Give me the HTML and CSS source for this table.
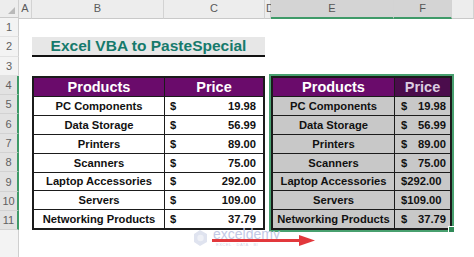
FILE: index.html
```html
<!DOCTYPE html>
<html>
<head>
<meta charset="utf-8">
<link rel="stylesheet" href="styles.css">
</head>
<body>
<div class="sheet">
  <div class="corner"><span class="tri"></span></div>
  <div class="colheads">
    <div class="ch">A</div>
    <div class="ch">B</div>
    <div class="ch">C</div>
    <div class="ch ch-d">D</div>
    <div class="ch sel">E</div>
    <div class="ch sel">F</div>
    <div class="ch"></div>
  </div>
  <div class="rowheads">
    <div class="rh">1</div>
    <div class="rh">2</div>
    <div class="rh">3</div>
    <div class="rh sel">4</div>
    <div class="rh sel">5</div>
    <div class="rh sel">6</div>
    <div class="rh sel">7</div>
    <div class="rh sel">8</div>
    <div class="rh sel">9</div>
    <div class="rh sel">10</div>
    <div class="rh sel">11</div>
    <div class="rh filler"></div>
  </div>
  <div class="body">
    <div class="title">Excel VBA to PasteSpecial</div>

    <div class="tbl tbl-left">
      <div class="th">Products</div><div class="th">Price</div>
      <div class="td">PC Components</div><div class="td num"><span>$</span><span>19.98</span></div>
      <div class="td">Data Storage</div><div class="td num"><span>$</span><span>56.99</span></div>
      <div class="td">Printers</div><div class="td num"><span>$</span><span>89.00</span></div>
      <div class="td">Scanners</div><div class="td num"><span>$</span><span>75.00</span></div>
      <div class="td">Laptop Accessories</div><div class="td num"><span>$</span><span>292.00</span></div>
      <div class="td">Servers</div><div class="td num"><span>$</span><span>109.00</span></div>
      <div class="td">Networking Products</div><div class="td num"><span>$</span><span>37.79</span></div>
    </div>

    <div class="tbl tbl-right">
      <div class="th">Products</div><div class="th th-dim">Price</div>
      <div class="td">PC Components</div><div class="td num"><span>$</span><span>19.98</span></div>
      <div class="td">Data Storage</div><div class="td num"><span>$</span><span>56.99</span></div>
      <div class="td">Printers</div><div class="td num"><span>$</span><span>89.00</span></div>
      <div class="td">Scanners</div><div class="td num"><span>$</span><span>75.00</span></div>
      <div class="td">Laptop Accessories</div><div class="td num"><span>$292.00</span></div>
      <div class="td">Servers</div><div class="td num"><span>$109.00</span></div>
      <div class="td">Networking Products</div><div class="td num"><span>$</span><span>37.79</span></div>
      <span class="handle"></span>
    </div>
  </div>

  <svg class="annot" width="130" height="26" viewBox="0 0 130 26">
    <path d="M4 8 L10 4 L17 8 L17 16 L10 20 L4 16 Z" fill="#dfe3ef"/>
    <circle cx="10.5" cy="12" r="3.2" fill="#eef0f6"/>
    <text x="23" y="13" class="wm">exceldemy</text>
    <text x="26" y="20" class="wm-small">EXCEL · DATA · BI</text>
    <line x1="22" y1="14.5" x2="112" y2="14.5" stroke="#e2383c" stroke-width="3"/>
    <polygon points="109,9 125,14.5 109,20" fill="#e2383c"/>
  </svg>
</div>
</body>
</html>
```

FILE: styles.css
```css
html, body {
  margin: 0;
  padding: 0;
  background: #ffffff;
}

body {
  font-family: "Liberation Sans", Arial, sans-serif;
}

.sheet {
  position: relative;
  width: 474px;
  height: 257px;
  display: grid;
  grid-template-columns: 19px 1fr;
  grid-template-rows: 18px 1fr;
  overflow: hidden;
}

.corner {
  background: #ededed;
  border-right: 1px solid #cfcfcf;
  border-bottom: 1px solid #c9c9c9;
  box-sizing: border-box;
  display: flex;
  justify-content: flex-end;
  align-items: flex-end;
  padding: 0 3px 3px 0;
}

.tri {
  width: 0;
  height: 0;
  border-left: 7px solid transparent;
  border-bottom: 7px solid #b9b9b9;
}

.colheads {
  display: grid;
  grid-template-columns: 13px 132px 101px 6px 123px 58px 1fr;
  background: #ededed;
}

.ch {
  box-sizing: border-box;
  border-right: 1px solid #d3d3d3;
  border-bottom: 1px solid #c9c9c9;
  font-size: 11px;
  line-height: 17px;
  color: #5a5a5a;
  text-align: center;
  white-space: nowrap;
}

.ch-d {
  text-align: left;
  overflow: visible;
  padding-left: 1px;
}

.ch.sel {
  background: #d4d4d4;
  border-bottom: 2px solid #3f9a68;
  color: #555555;
}

.rowheads {
  display: grid;
  grid-template-rows: repeat(11, 19.3px) 1fr;
  background: #f3f3f3;
}

.rh {
  box-sizing: border-box;
  border-right: 1px solid #cfcfcf;
  border-bottom: 1px solid #e2e2e2;
  font-size: 11px;
  color: #606060;
  display: flex;
  align-items: center;
  justify-content: center;
}

.rh.sel {
  background: #e2e2e2;
  border-right: 2px solid #3f9a68;
  border-bottom-color: #d2d2d2;
}

.rh.filler {
  border-bottom: none;
}

.body {
  display: grid;
  grid-template-columns: 13px 132px 101px 6px 123px 58px 1fr;
  grid-template-rows: repeat(11, 19.3px) 1fr;
}

.title {
  grid-column: 2 / 4;
  grid-row: 2;
  background: #e7e7e7;
  border-bottom: 2px solid #111111;
  color: #167a6c;
  font-weight: bold;
  font-size: 15.5px;
  display: flex;
  align-items: center;
  justify-content: center;
  padding-top: 1px;
}

.tbl {
  grid-row: 4 / 12;
  display: grid;
  grid-template-rows: repeat(8, 1fr);
  gap: 1px;
  background: #1b1b1b;
  border: 2px solid #1b1b1b;
}

.tbl-left {
  grid-column: 2 / 4;
  grid-template-columns: 130px 1fr;
}

.tbl-right {
  grid-column: 5 / 7;
  grid-template-columns: 121px 1fr;
  position: relative;
  outline: 2px solid #48a06f;
}

.th {
  background: #6a0b6b;
  color: #ffffff;
  font-weight: bold;
  font-size: 14.5px;
  display: flex;
  align-items: center;
  justify-content: center;
}

.th-dim {
  background: #4b0c4c;
  color: #dccde0;
}

.td {
  background: #ffffff;
  color: #111111;
  font-weight: bold;
  font-size: 11.2px;
  display: flex;
  align-items: center;
  justify-content: center;
  white-space: nowrap;
}

.tbl-right .td {
  background: #c8c8c8;
}

.num {
  justify-content: space-between;
  padding: 0 7px 0 5px;
}

.tbl-right .num {
  padding: 0 4px 0 6px;
}

.handle {
  position: absolute;
  right: -5px;
  bottom: -5px;
  width: 5px;
  height: 5px;
  background: #2f8a58;
  border: 1px solid #ffffff;
}

.annot {
  position: absolute;
  left: 190px;
  top: 226px;
}

.wm {
  font-family: "Liberation Sans", Arial, sans-serif;
  font-size: 14px;
  fill: #c3c9e6;
}

.wm-small {
  font-family: "Liberation Sans", Arial, sans-serif;
  font-size: 4px;
  fill: #d0d4e4;
  letter-spacing: 0.5px;
}
```
